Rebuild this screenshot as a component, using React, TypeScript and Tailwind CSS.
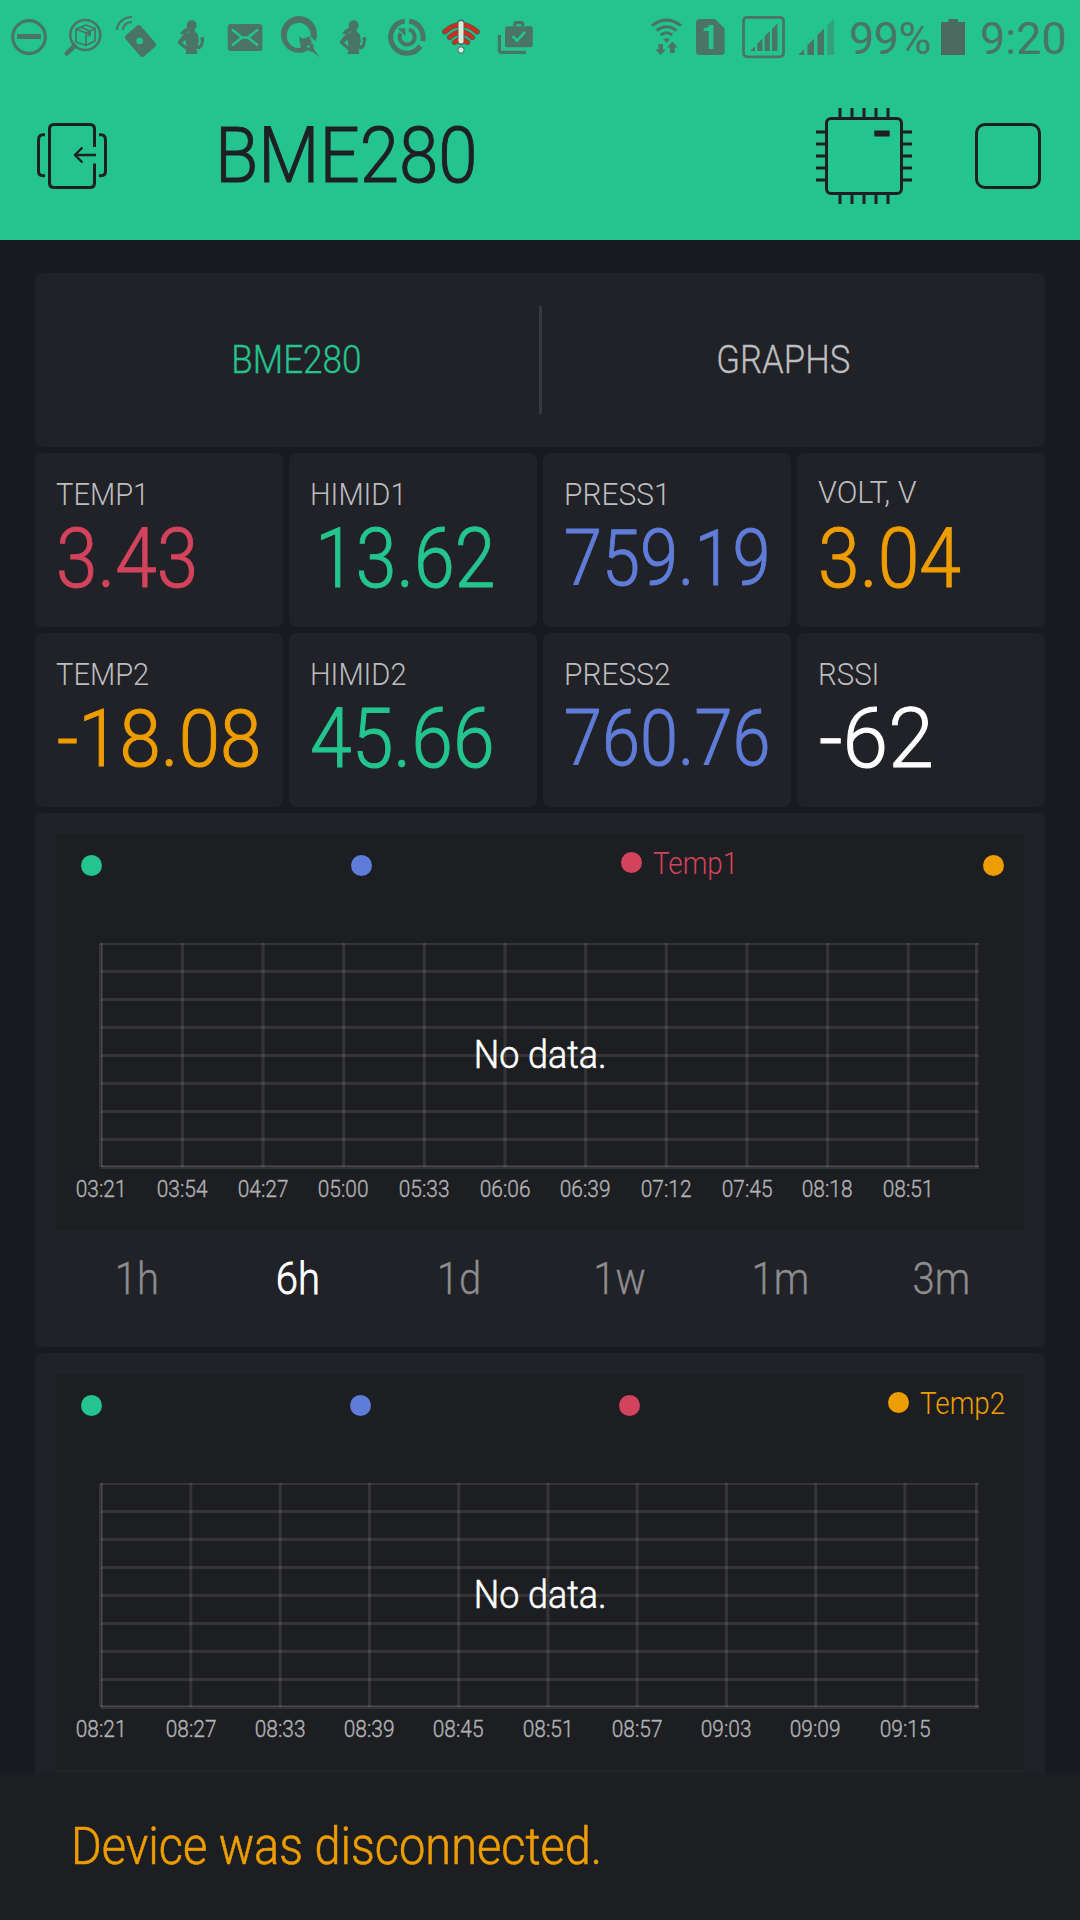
import type { ReactNode } from 'react'
import { clsx } from 'clsx'

const INK = '#4a7466'
const DARK = '#1e2024'
const GREEN = '#24c48e'

interface Reading {
  label: string
  value: string
  tone: string
  size: string
  labelClass: string
}

const READINGS: Reading[] = [
  {
    label: 'TEMP1',
    value: '3.43',
    tone: 'text-[#d3435c]',
    size: 'text-[83px] scale-x-[0.9]',
    labelClass: 'scale-x-[0.91]',
  },
  {
    label: 'HIMID1',
    value: '13.62',
    tone: 'text-[#24c48e]',
    size: 'ml-[5px] text-[83px] scale-x-[0.885]',
    labelClass: 'scale-x-[0.91]',
  },
  {
    label: 'PRESS1',
    value: '759.19',
    tone: 'text-[#5f7cd8]',
    size: 'mt-0.5 text-[77px] scale-x-[0.89]',
    labelClass: 'scale-x-[0.935]',
  },
  {
    label: 'VOLT, V',
    value: '3.04',
    tone: 'text-[#ed9d00]',
    size: 'text-[83px] scale-x-[0.905]',
    labelClass: 'relative -top-0.5 scale-x-[0.955]',
  },
  {
    label: 'TEMP2',
    value: '-18.08',
    tone: 'text-[#ed9d00]',
    size: 'ml-px text-[80px] scale-x-[0.93]',
    labelClass: 'scale-x-[0.91]',
  },
  {
    label: 'HIMID2',
    value: '45.66',
    tone: 'text-[#24c48e]',
    size: 'text-[83px] scale-x-[0.905]',
    labelClass: 'scale-x-[0.91]',
  },
  {
    label: 'PRESS2',
    value: '760.76',
    tone: 'text-[#5f7cd8]',
    size: 'mt-0.5 text-[77px] scale-x-[0.89]',
    labelClass: 'scale-x-[0.935]',
  },
  {
    label: 'RSSI',
    value: '-62',
    tone: 'text-white',
    size: 'ml-px text-[83px] scale-x-[0.99]',
    labelClass: 'scale-x-[0.92]',
  },
]

const RANGES = ['1h', '6h', '1d', '1w', '1m', '3m']

/** Notification slot in the status bar, 54px wide. */
function Slot({ children }: { children: ReactNode }) {
  return (
    <svg width="54" height="72" viewBox="0 0 54 72" fill={INK} aria-hidden>
      {children}
    </svg>
  )
}

function Runner() {
  return (
    <Slot>
      <circle cx="27.7" cy="25.3" r="5" />
      <path d="M24 27 L19 30 L16 34 L21 34.2 L25.5 30.5 Z" />
      <path d="M25.5 29 L30.5 29 L31 32 L33.8 34 L34.8 41 L33.4 46 L36 44.6 L37 41 L36.2 38.5 L37.6 37 L40 37 L40 41.5 L38.6 46.5 L35.5 49.5 L32.6 48.8 L33.4 54 L21.6 54 L22.2 50 L14 43.5 L13.8 41.5 L19.5 34.5 L24.5 32.5 Z M21.5 40 L18 42.5 L22.6 46.5 Z" fillRule="evenodd" />
    </Slot>
  )
}

function StatusBar() {
  return (
    <div className="flex h-[72px] pl-0.5 text-[#4a7466]">
      <Slot>
        <circle cx="27" cy="37" r="16.3" fill="none" stroke={INK} strokeWidth="3.2" />
        <rect x="15" y="34" width="24" height="5" />
      </Slot>
      <Slot>
        <g fill="none" stroke={INK}>
          <circle cx="29.3" cy="35" r="15" strokeWidth="2.6" />
          <path d="M18.5 46 L10.8 53.4" strokeWidth="4.6" strokeLinecap="round" />
          <path d="M20 29 L30 25 L39 28.5 L39 41 L30 45.5 L20 42 Z M20 29 L30 33 L39 28.5 M30 33 V45 M24.5 27.2 L34 31" strokeWidth="1.7" strokeLinejoin="round" />
        </g>
        <path d="M31.5 32.6 L35 31 V35.5 L31.5 37 Z" />
      </Slot>
      <Slot>
        <rect x="-10" y="-14" width="20" height="28" rx="3.2" transform="translate(30.5 41) rotate(-41)" />
        <circle cx="29.7" cy="41" r="3.3" fill={GREEN} />
        <path d="M7 30 A15 13 0 0 1 22 17 M12.8 30 A9.2 8 0 0 1 22 22" fill="none" stroke={INK} strokeWidth="2.2" />
      </Slot>
      <Runner />
      <Slot>
        <rect x="9.7" y="24" width="34.6" height="27" rx="3" />
        <path d="M14 29.5 L24 37.5 H30 L40 29.5 M14 45.5 L24 37.5 M30 37.5 L40 45.5" fill="none" stroke={GREEN} strokeWidth="2.4" />
      </Slot>
      <Slot>
        <path d="M26.8 16 A18.2 18.4 0 1 0 34.5 51.2 L31.5 47 A12 12.6 0 1 1 38.6 37 L43.8 41 A18.2 18.4 0 0 0 26.8 16 Z" />
        <path d="M27.3 36 C30 40 33 39 37.5 35.8 C37.8 40.5 41 42 41.5 45.5 C41 48.5 43 51 48.2 57.7 C43 53 39 51 35.5 50.5 C32 50 30 49 28.5 49 C29.5 45.5 27 41 27.3 36 Z" />
        <circle cx="36.3" cy="46.6" r="1.3" fill={GREEN} />
        <circle cx="40" cy="43" r="1" fill={GREEN} />
      </Slot>
      <Runner />
      <Slot>
        <g fill="none" stroke={INK}>
          <path d="M29.2 21 A16.2 16.2 0 0 1 42.6 41" strokeWidth="5" />
          <path d="M24.8 21 A16.2 16.2 0 1 0 40.4 46" strokeWidth="5" />
          <path d="M29 29.6 A7.6 7.6 0 1 1 20.6 33.2" strokeWidth="4" />
        </g>
        <path d="M17.5 28.2 H25.3 V36 Z" />
      </Slot>
      <Slot>
        <g fill="none" strokeLinecap="round">
          <g stroke="#41685a" strokeWidth="5.6">
            <path d="M10.8 31.8 Q27 17.5 43.2 31.8 M15.6 37.4 Q27 26.8 38.4 37.4 M20.6 42.4 Q27 37 33.4 42.4" />
            <path d="M27 23 V41.5" strokeWidth="7" />
          </g>
          <path d="M10.8 31.8 Q27 17.5 43.2 31.8 M15.6 37.4 Q27 26.8 38.4 37.4 M20.6 42.4 Q27 37 33.4 42.4" stroke="#c9301f" strokeWidth="3.9" />
          <path d="M27 23.4 V41" stroke="#d4ebe0" strokeWidth="5" />
        </g>
        <circle cx="27" cy="50" r="3.2" fill="#d4ebe0" stroke="#41685a" strokeWidth="1" />
      </Slot>
      <Slot>
        <rect x="17" y="26.3" width="27.8" height="21" rx="2.4" />
        <path d="M26.8 26 V24 Q26.8 22.6 28.2 22.6 H33.3 Q34.7 22.6 34.7 24 V26 M11.4 35 V50.6 Q11.4 52.3 13 52.3 H37.8" fill="none" stroke={INK} strokeWidth="3.2" />
        <path d="M24.6 36.3 L29 40.6 L37 32" fill="none" stroke={GREEN} strokeWidth="2.6" />
      </Slot>

      <div className="ml-auto flex pr-4">
        <svg width="32" height="72" viewBox="0 0 32 72" fill={INK} className="mr-[13px]" aria-hidden>
          <path d="M1 25.6 Q15.5 14.6 30 25.6 M5.6 30.6 Q15.5 23 25.4 30.6 M9.8 35 Q15.5 30.4 21.2 35" fill="none" stroke={INK} strokeWidth="3" />
          <path d="M12.3 39.4 Q15.5 36.4 18.7 39.4 L15.5 42.8 Z" />
          <path d="M7.4 44 H12 V49.5 H15 L9.7 55.3 L4.4 49.5 H7.4 Z M19 53 H23.7 V47.4 H26.7 L21.4 41.4 L16 47.4 H19 Z" />
        </svg>
        <svg width="29" height="72" viewBox="0 0 29 72" fill={INK} className="mr-[17px]" aria-hidden>
          <path d="M3.5 19 H19 L28.6 28.6 V51.5 Q28.6 55 25 55 H3.5 Q0 55 0 51.5 V22.5 Q0 19 3.5 19 Z" />
          <path d="M17.4 25 V49 H12.8 V31 H7.6 V28.2 Q12.6 28 13.6 25 Z" fill={GREEN} />
        </svg>
        <svg width="43" height="72" viewBox="0 0 43 72" fill={INK} className="mr-[13px]" aria-hidden>
          <rect x="1.5" y="17.3" width="40" height="39.5" rx="3.5" fill="none" stroke={INK} strokeWidth="2.8" />
          <path d="M8 51 L13 46.5 V51 Z M15.2 51 V43.8 L20.4 38.8 V51 Z M22.6 51 V36.2 L27.8 31.2 V51 Z M30 51 V29 L35.4 23.6 V51 Z" />
        </svg>
        <svg width="36" height="72" viewBox="0 0 36 72" fill={INK} className="mr-[15px]" aria-hidden>
          <path d="M0 55 L6.2 49 V55 Z M9.4 55 V45 L16 38.8 V55 Z M19.4 55 V35 L26 28.6 V55 Z" />
          <path d="M29.4 55 V25.4 L36 19 V55 Z" opacity="0.45" />
        </svg>
        <span className="mt-4 w-[92px] text-[45px] leading-none tracking-[-0.5px]">99%</span>
        <svg width="24" height="72" viewBox="0 0 24 72" fill="#4d6a60" className="mr-[15px]" aria-hidden>
          <path d="M7.3 19 H17 V22 H24 V55 H0 V22 H7.3 Z" />
        </svg>
        <span className="mt-4 w-[84px] text-[45px] leading-none">9:20</span>
      </div>
    </div>
  )
}

function ExitIcon() {
  return (
    <svg width="70" height="66" viewBox="0 0 70 66" fill="none" stroke={DARK} strokeWidth="3" aria-hidden>
      <path d="M57.5 24 V6 Q57.5 1.5 53 1.5 H17 Q12.5 1.5 12.5 6 V60 Q12.5 64.5 17 64.5 H53 Q57.5 64.5 57.5 60 V40.5" />
      <path d="M8 11.8 H6 Q1.5 11.8 1.5 17 V48 Q1.5 52.7 6 52.7 H8 M62 11.8 H64 Q68.5 11.8 68.5 17 V48 Q68.5 52.7 64 52.7 H62" />
      <path d="M59 32 H38.5 M45.4 24.5 L38 32 L45.4 39.5" strokeWidth="2.4" />
    </svg>
  )
}

function ChipIcon() {
  const pins = [24, 36, 48, 60, 72]
  return (
    <svg width="96" height="96" viewBox="0 0 96 96" fill="none" stroke={DARK} strokeWidth="3" aria-hidden>
      <rect x="10.5" y="10.5" width="75" height="75" rx="4.5" />
      {pins.map((p) => (
        <path key={p} d={`M${p} 0 V9 M${p} 87 V96 M0 ${p} H9 M87 ${p} H96`} />
      ))}
      <rect x="58.3" y="22.5" width="15.4" height="6" fill={DARK} stroke="none" />
    </svg>
  )
}

function ReadingCard({ label, value, tone, size, labelClass }: Reading) {
  return (
    <div className="h-[174px] rounded-lg bg-[#212227] pt-[25px] pl-[21px]">
      <p
        className={clsx(
          'h-8 origin-left text-[32px] leading-none whitespace-nowrap text-[#bdbdbf]',
          labelClass,
        )}
      >
        {label}
      </p>
      <div className="mt-[7px] flex h-[83px] items-center [-webkit-text-stroke:1px]">
        <span className={clsx('origin-left leading-none whitespace-nowrap', size, tone)}>{value}</span>
      </div>
    </div>
  )
}

interface ChartProps {
  step: number
  ticks: string[]
  legend: ReactNode
}

function Chart({ step, ticks, legend }: ChartProps) {
  const rows = [1, 2, 3, 4, 5, 6, 7]
  return (
    <div className="relative h-[396px] bg-[#1d1e22]">
      <div className="flex h-[109px] items-start">{legend}</div>
      <svg width="968" height="228" viewBox="56 943 968 228" className="block" stroke="#fff" strokeOpacity="0.1" strokeWidth="3" aria-hidden>
        <path d="M101 944 H979" strokeWidth="2" />
        {rows.map((r) => (
          <path key={r} d={`M101 ${943.5 + r * 28} H979`} />
        ))}
        <path d="M101 1166 H979" strokeWidth="2" />
        <path d="M101 1167.5 H979 M100.5 943 V1167" />
        <path d="M102 943 V1167" strokeWidth="2" />
        {ticks.slice(1).map((t, i) => (
          <path key={t} d={`M${101.7 + (i + 1) * step} 943 V1167`} />
        ))}
        <path d="M976.5 943 V1167" />
      </svg>
      <div className="flex h-6 pt-[6px] text-[24px] leading-none text-[#b2b2b4] [-webkit-text-stroke:0.4px]">
        {ticks.map((t, i) => (
          <span
            key={t}
            className="flex shrink-0 justify-center"
            style={{ width: step, marginLeft: i === 0 ? 45.5 - step / 2 : 0 }}
          >
            <span className="scale-x-[0.87]">{t}</span>
          </span>
        ))}
      </div>
      <p className="absolute inset-x-0 top-[202px] text-center text-[39px] leading-none text-white [-webkit-text-stroke:0.6px]">
        <span className="inline-block scale-x-[0.92]">No data.</span>
      </p>
    </div>
  )
}

function Dot({ className }: { className: string }) {
  return <span className={clsx('h-[21px] w-[21px] shrink-0 rounded-full', className)} />
}

export default function App() {
  return (
    <div className="flex h-[1920px] w-[1080px] flex-col overflow-hidden bg-[#191a1f] font-['Roboto',sans-serif] font-light">
      <header className="h-60 shrink-0 bg-[#24c48e]">
        <div className="font-normal">
          <StatusBar />
        </div>
        <div className="flex h-[168px] items-center pr-[39px] pl-[37px]">
          <ExitIcon />
          <h1 className="ml-[108px] origin-left scale-x-[0.918] text-[77px] leading-none whitespace-nowrap text-[#1e2024] [-webkit-text-stroke:1px]">
            BME280
          </h1>
          <div className="ml-auto flex items-center gap-[63px]">
            <ChipIcon />
            <span className="h-[66px] w-[66px] rounded-[10px] border-[3px] border-[#1e2024]" />
          </div>
        </div>
      </header>

      <main className="flex min-h-0 flex-1 flex-col gap-1.5 overflow-hidden px-[35px] pt-[33px]">
        <nav className="flex h-[174px] shrink-0 items-center rounded-lg bg-[#212227] text-[39px] leading-none [-webkit-text-stroke:0.3px]">
          <span className="flex flex-1 justify-center pl-5 text-[#24c48e]">
            <span className="scale-x-[0.9]">BME280</span>
          </span>
          <span className="h-[108px] w-[3px] bg-[#37383c]" />
          <span className="flex flex-1 justify-center pr-5 text-[#bdbdbf]">
            <span className="scale-x-[0.89]">GRAPHS</span>
          </span>
        </nav>

        <section className="grid shrink-0 grid-cols-4 gap-1.5">
          {READINGS.map((r) => (
            <ReadingCard key={r.label} {...r} />
          ))}
        </section>

        <section className="h-[534px] shrink-0 rounded-lg bg-[#212227] px-[21px] pt-[21px]">
          <Chart
            step={80.66}
            ticks={['03:21', '03:54', '04:27', '05:00', '05:33', '06:06', '06:39', '07:12', '07:45', '08:18', '08:51']}
            legend={
              <>
                <Dot className="mt-[21px] ml-[25px] bg-[#24c48e]" />
                <Dot className="mt-[21px] ml-[249px] bg-[#5f7cd8]" />
                <Dot className="mt-[18px] ml-[249px] bg-[#d3435c]" />
                <span className="mt-[13px] ml-[11px] origin-left scale-x-[0.87] text-[32px] leading-none text-[#d3435c]">
                  Temp1
                </span>
                <Dot className="mt-[21px] mr-5 ml-auto bg-[#ed9d00]" />
              </>
            }
          />
          <div className="flex h-24 items-center pr-0.5 text-[45px] leading-none">
            {RANGES.map((r) => (
              <span
                key={r}
                className={clsx(
                  'flex flex-1 justify-center',
                  r === '6h' ? 'text-white [-webkit-text-stroke:0.8px]' : 'text-[#8d8d90] [-webkit-text-stroke:0.3px]',
                )}
              >
                <span className="scale-x-[0.89]">{r}</span>
              </span>
            ))}
          </div>
        </section>

        <section className="h-[534px] shrink-0 rounded-lg bg-[#212227] px-[21px] pt-[21px]">
          <Chart
            step={89.25}
            ticks={['08:21', '08:27', '08:33', '08:39', '08:45', '08:51', '08:57', '09:03', '09:09', '09:15']}
            legend={
              <>
                <Dot className="mt-[21px] ml-[25px] bg-[#24c48e]" />
                <Dot className="mt-[21px] ml-[248px] bg-[#5f7cd8]" />
                <Dot className="mt-[21px] ml-[248px] bg-[#d3435c]" />
                <Dot className="mt-[18px] ml-[248px] bg-[#ed9d00]" />
                <span className="mt-[13px] ml-[11px] origin-left scale-x-[0.87] text-[32px] leading-none text-[#ed9d00]">
                  Temp2
                </span>
              </>
            }
          />
        </section>
      </main>

      <footer className="flex h-[147px] shrink-0 items-center bg-[#1d1e22] pl-[71px] text-[51px] leading-none text-[#ed9d00] [-webkit-text-stroke:0.6px]">
        <span className="origin-left scale-x-[0.92] whitespace-nowrap">Device was disconnected.</span>
      </footer>
    </div>
  )
}
